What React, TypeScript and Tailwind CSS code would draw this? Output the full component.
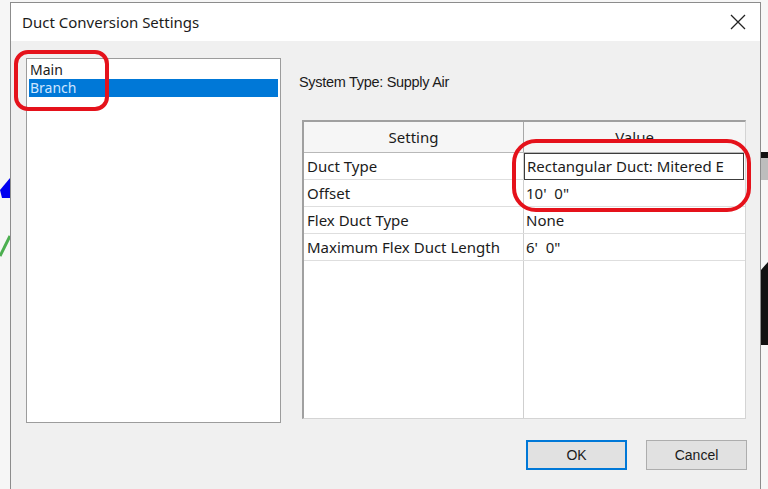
import React from 'react';

const rows = [
    { setting: 'Duct Type', value: 'Rectangular Duct: Mitered E', selected: true },
    { setting: 'Offset', value: "10'  0\"" },
    { setting: 'Flex Duct Type', value: 'None' },
    { setting: 'Maximum Flex Duct Length', value: "6'  0\"" },
];

export default function App() {
    return (
        <div className="relative w-[768px] h-[489px] overflow-hidden bg-[#f6f6f6] font-['Noto_Sans',sans-serif] text-[#1b1b1b]">
            {/* CAD drawing behind the dialog */}
            <svg className="absolute left-0 top-0" width="768" height="489">
                <path d="M0 190 L10 178 L10 198 L2 198 Z" fill="#0000f0" />
                <path d="M0 256 L10 236" stroke="#4caf50" strokeWidth="3" />
                <rect x="760" y="152" width="8" height="6" fill="#111" />
                <rect x="760" y="158" width="8" height="22" fill="#bdbdbd" />
                <path d="M761 270 L768 262 L768 345 L761 345 Z" fill="#111" />
            </svg>

            {/* Dialog window */}
            <div className="relative ml-[10px] mt-[2px] w-[751px] h-[500px] border border-[#8c8c8c] bg-[#f0f0f0] flex flex-col">
                <div className="h-[38px] bg-white flex items-center justify-between pl-[11px] pr-[14px]">
                    <span className="text-[15px]">Duct Conversion Settings</span>
                    <svg width="16" height="16" viewBox="0 0 16 16">
                        <path d="M1 1 L15 15 M15 1 L1 15" stroke="#222" strokeWidth="1.3" />
                    </svg>
                </div>

                <div className="flex pl-[15px] pt-[17px]">
                    {/* List box */}
                    <div className="w-[255px] h-[365px] border border-[#9c9c9c] bg-white pt-[2px] pl-[2px] pr-[2px] text-[14px] leading-[18px]">
                        <div className="pl-[1px]">Main</div>
                        <div className="pl-[1px] bg-[#0078d7] text-[#cfe6ff]">Branch</div>
                    </div>

                    {/* Right side */}
                    <div className="ml-[18px] flex flex-col">
                        <div className="mt-[17px] h-[16px] flex items-center text-[14.5px] font-['Liberation_Sans',sans-serif] tracking-[-0.3px]">
                            System Type: Supply Air
                        </div>

                        <div className="ml-[3px] mt-[29px] w-[444px] h-[299px] border-l-2 border-t-2 border-r border-b border-l-[#a0a0a0] border-t-[#a0a0a0] border-r-[#d4d4d4] border-b-[#d4d4d4] bg-white flex flex-col">
                            <div className="flex h-[31px] bg-[#f6f6f6] border-b border-[#b8b8b8] text-[15px]">
                                <div className="w-[220px] border-r border-[#a8a8a8] flex items-center justify-center">Setting</div>
                                <div className="flex-1 flex items-center justify-center">Value</div>
                            </div>
                            {rows.map((r) => (
                                <div key={r.setting} className="flex h-[27px] border-b border-[#dedede] text-[15px]">
                                    <div className="w-[220px] border-r border-[#cfcfcf] flex items-center pl-[3px]">{r.setting}</div>
                                    <div className={`flex-1 flex items-center pl-[2px] ${r.selected ? 'border border-[#3c3c3c] mr-[1px] mb-[-1px]' : ''}`}>
                                        <span className="whitespace-pre">{r.value}</span>
                                    </div>
                                </div>
                            ))}
                            <div className="flex flex-1">
                                <div className="w-[220px] border-r border-[#cfcfcf]" />
                                <div className="flex-1" />
                            </div>
                        </div>

                        <div className="mt-[21px] ml-[227px] flex gap-[19px] font-['Liberation_Sans',sans-serif] text-[14px]">
                            <button className="w-[101px] h-[30px] bg-[#e1e1e1] border-2 border-[#0078d7]">OK</button>
                            <button className="w-[101px] h-[30px] bg-[#e1e1e1] border border-[#adadad]">Cancel</button>
                        </div>
                    </div>
                </div>
            </div>

            {/* Red annotation marks */}
            <div className="absolute left-[14px] top-[50px] w-[95px] h-[61px] border-[4px] border-[#e5121b] rounded-[14px]" />
            <div className="absolute left-[512px] top-[139px] w-[239px] h-[73px] border-[4px] border-[#e5121b] rounded-[24px]" />
        </div>
    );
}
